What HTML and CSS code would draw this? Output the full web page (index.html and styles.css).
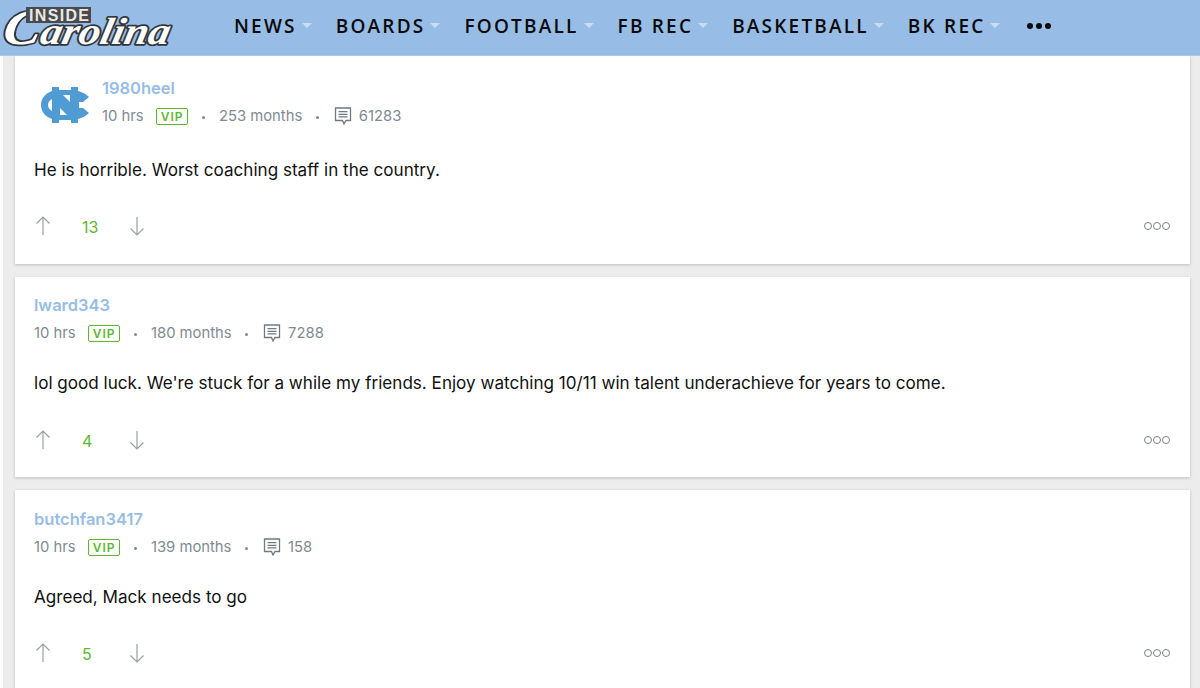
FILE: index.html
```html
<!DOCTYPE html>
<html lang="en">
<head>
    <meta charset="UTF-8">
    <title>Inside Carolina</title>
    <link rel="stylesheet" href="styles.css">
</head>
<body>
    <header class="site-header">
        <a class="logo">
            <svg class="logo-art" viewBox="0 0 176 50" width="176" height="50">
                <text class="logo-word" transform="translate(1 41) skewX(-12)" textLength="167" lengthAdjust="spacingAndGlyphs"><tspan class="logo-cap">C</tspan>arolina</text>
                <rect class="logo-plate" x="26" y="4" width="65" height="16"/>
                <text class="logo-inside" x="29" y="17.500" textLength="60">INSIDE</text>
            </svg>
        </a>
        <nav class="main-nav">
            <a class="nav-item">NEWS<i class="caret"></i></a>
            <a class="nav-item">BOARDS<i class="caret"></i></a>
            <a class="nav-item">FOOTBALL<i class="caret"></i></a>
            <a class="nav-item">FB REC<i class="caret"></i></a>
            <a class="nav-item">BASKETBALL<i class="caret"></i></a>
            <a class="nav-item">BK REC<i class="caret"></i></a>
            <a class="nav-more"><i></i><i></i><i></i></a>
        </nav>
    </header>

    <main class="thread">
        <article class="post post-first">
            <div class="post-head">
                <svg class="avatar" viewBox="0 0 50 40" width="50" height="40">
                    <path fill="#4f9bd4" d="M1 20C1 13 6 8 12 6V2h7v3h12V2h7v4c4 1 8 3 11 6l-6 5h-4v6h4l6 5c-3 3-7 5-11 6v4h-7v-3H19v3h-7v-4C6 32 1 27 1 20z"/>
                    <path fill="#fff" d="M12 14c-2 1-4 3-4 6s2 5 4 6zM23 10h7v7zM20 23l7 7h-7z"/>
                </svg>
                <div class="post-author">
                    <a class="username">1980heel</a>
                    <div class="meta">
                        <span>10 hrs</span>
                        <span class="vip">VIP</span>
                        <span class="dot"></span>
                        <span>253 months</span>
                        <span class="dot"></span>
                        <svg class="msg-icon" viewBox="0 0 18 18" width="18" height="18"><path d="M1.500 1h15v12.500h-4.500l-2 3.500-1.500-3.500h-7zM4.500 4.700h9M4.500 7.300h9M4.500 9.900h9"/></svg>
                        <span>61283</span>
                    </div>
                </div>
            </div>
            <p class="post-body">He is horrible. Worst coaching staff in the country.</p>
            <div class="post-foot">
                <svg class="arrow" viewBox="0 0 16 20" width="16" height="20"><path d="M8 19V1M1.500 7.500 8 1l6.500 6.500"/></svg>
                <span class="score">13</span>
                <svg class="arrow" viewBox="0 0 16 20" width="16" height="20"><path d="M8 1v18M1.500 12.500 8 19l6.500-6.500"/></svg>
                <span class="more"><i></i><i></i><i></i></span>
            </div>
        </article>

        <article class="post">
            <div class="post-author">
                <a class="username">lward343</a>
                <div class="meta">
                    <span>10 hrs</span>
                    <span class="vip">VIP</span>
                    <span class="dot"></span>
                    <span>180 months</span>
                    <span class="dot"></span>
                    <svg class="msg-icon" viewBox="0 0 18 18" width="18" height="18"><path d="M1.500 1h15v12.500h-4.500l-2 3.500-1.500-3.500h-7zM4.500 4.700h9M4.500 7.300h9M4.500 9.900h9"/></svg>
                    <span>7288</span>
                </div>
            </div>
            <p class="post-body">lol good luck. We're stuck for a while my friends. Enjoy watching 10/11 win talent underachieve for years to come.</p>
            <div class="post-foot">
                <svg class="arrow" viewBox="0 0 16 20" width="16" height="20"><path d="M8 19V1M1.500 7.500 8 1l6.500 6.500"/></svg>
                <span class="score">4</span>
                <svg class="arrow" viewBox="0 0 16 20" width="16" height="20"><path d="M8 1v18M1.500 12.500 8 19l6.500-6.500"/></svg>
                <span class="more"><i></i><i></i><i></i></span>
            </div>
        </article>

        <article class="post post-last">
            <div class="post-author">
                <a class="username">butchfan3417</a>
                <div class="meta">
                    <span>10 hrs</span>
                    <span class="vip">VIP</span>
                    <span class="dot"></span>
                    <span>139 months</span>
                    <span class="dot"></span>
                    <svg class="msg-icon" viewBox="0 0 18 18" width="18" height="18"><path d="M1.500 1h15v12.500h-4.500l-2 3.500-1.500-3.500h-7zM4.500 4.700h9M4.500 7.300h9M4.500 9.900h9"/></svg>
                    <span>158</span>
                </div>
            </div>
            <p class="post-body">Agreed, Mack needs to go</p>
            <div class="post-foot">
                <svg class="arrow" viewBox="0 0 16 20" width="16" height="20"><path d="M8 19V1M1.500 7.500 8 1l6.500 6.500"/></svg>
                <span class="score">5</span>
                <svg class="arrow" viewBox="0 0 16 20" width="16" height="20"><path d="M8 1v18M1.500 12.500 8 19l6.500-6.500"/></svg>
                <span class="more"><i></i><i></i><i></i></span>
            </div>
        </article>
    </main>
</body>
</html>
```
FILE: styles.css
```css
html, body { height: 100%; }
body { margin: 0; background-color: #fff; color: #111; font-family: 'Inter', sans-serif; overflow: hidden; }

/* Cabecera */
.site-header { display: flex; align-items: center; height: 56px; padding-bottom: 3px; background-color: #97bde6; border-bottom: 1px solid #a9c8ea; box-sizing: border-box; }
.logo { display: block; width: 234px; height: 50px; flex: none; margin-top: 3px; }
.logo-art { display: block; overflow: visible; }
.logo-plate { fill: #4a4a4a; }
.logo-inside { fill: #e8e8e8; font: 700 16px 'Liberation Sans', sans-serif; }
.logo-word { font-family: 'Liberation Serif', serif; font-style: italic; font-weight: 700; font-size: 38px; fill: #fff; stroke: #33363a; stroke-width: 3.500px; paint-order: stroke fill; stroke-linejoin: round; }
.logo-cap { font-size: 50px; }

.main-nav { display: flex; align-items: center; gap: 24px; }
.nav-item { display: flex; align-items: center; color: #0a0a0a; font-family: 'Open Sans', sans-serif; font-size: 19px; font-weight: 600; letter-spacing: 2.2px; }
.caret { width: 0; height: 0; margin-left: 5px; margin-top: -2px; border-left: 5px solid transparent; border-right: 5px solid transparent; border-top: 5px solid #c9def5; }
.nav-more { display: flex; gap: 3px; margin-left: 3px; }
.nav-more i { width: 6px; height: 6px; border-radius: 50%; background: #0a0a0a; }

/* Lista de posts */
.thread { height: 632px; margin-left: 3px; padding: 0 10px 0 12px; background: #ececec; overflow: hidden; }
.post { height: 200px; margin-bottom: 13px; padding: 17px 19px 0; background: #fff; box-shadow: 0 1px 3px rgba(0, 0, 0, 0.2); box-sizing: border-box; }
.post-first { height: 208px; padding-top: 21px; }
.post-first .post-body { margin-top: 30px; }
.post-last { padding-top: 18px; }
.post-head { display: flex; align-items: center; gap: 12px; margin-left: 6px; }
.avatar { flex: none; margin-top: 4px; }

.username { display: block; color: #97bde6; font-size: 16.500px; font-weight: 600; line-height: 22px; }
.meta { display: flex; align-items: center; height: 24px; margin-top: 5px; color: #7f8a93; font-size: 14.800px; }
.vip { margin-left: 12px; padding: 0 4px; height: 15px; border: 1px solid #5cb82e; border-radius: 2px; color: #5cb82e; font-size: 12px; font-weight: 600; line-height: 15px; letter-spacing: 1px; }
.dot { width: 3px; height: 3px; margin: 2px 14px 0 13.500px; border-radius: 50%; background: #7f8a93; }
.msg-icon { margin-right: 7px; margin-left: 1px; fill: none; stroke: #6f7a83; stroke-width: 1.300; }

.post-body { margin: 26px 0 0; font-size: 17.100px; line-height: 24px; color: #111; }

.post-foot { display: flex; align-items: center; margin-top: 33px; }
.post-last .post-foot { margin-top: 32px; }
.post-first .post-foot { margin-top: 32px; }
.arrow { fill: none; stroke: #9a9fa5; stroke-width: 1.200; }
.post-foot .arrow:first-child { margin: 0 31px 0 1px; }
.score { width: 47px; margin-top: 3px; color: #5cb82e; font-size: 16px; }
.more { display: flex; gap: 1px; margin: 0 1px 0 auto; }
.more i { width: 8px; height: 8px; border: 1.500px solid #7d8287; border-radius: 50%; box-sizing: border-box; }
```
